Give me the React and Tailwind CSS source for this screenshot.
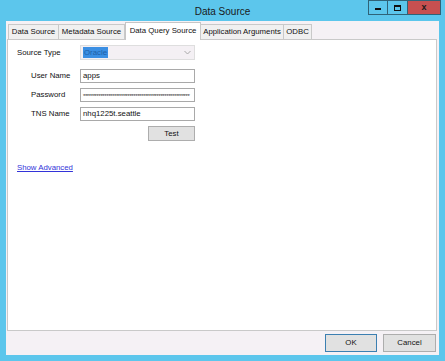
export default function App() {
  const tabs = [
    { label: "Data Source", w: "w-[51px]" },
    { label: "Metadata Source", w: "w-[67px]" },
    { label: "Data Query Source", w: "w-[76px]", active: true },
    { label: "Application Arguments", w: "w-[84px]" },
    { label: "ODBC", w: "w-[29px]" },
  ];
  return (
    <div className="w-[445px] h-[361px] bg-[#5cc6ec] flex flex-col px-[6px] pb-[6px] font-['Liberation_Sans',Arial,sans-serif] text-[#111] text-[7.8px] leading-none">
      {/* Title bar */}
      <div className="h-[21px] flex -mx-[6px] shrink-0">
        <div className="w-[77px]" />
        <div className="flex-1 text-center text-[10px] leading-[23px] text-[#1a1a1a]">Data Source</div>
        <div className="w-[77px] flex items-start">
          <div className="w-[20px] h-[15px] border border-[#2f6378] flex items-end justify-center pb-[4px]">
            <div className="w-[6px] h-[2px] bg-[#111]" />
          </div>
          <div className="w-[20px] h-[15px] border border-l-0 border-[#2f6378] flex items-center justify-center">
            <div className="w-[7px] h-[6px] border border-t-2 border-[#111]" />
          </div>
          <div className="w-[33px] h-[15px] border border-l-0 border-[#2f6378] bg-[#c75050] flex items-center justify-center text-[9px] font-bold text-[#1a1a1a]">
            x
          </div>
        </div>
      </div>

      {/* Client area */}
      <div className="flex-1 bg-[#f5f1f5] flex flex-col pl-[1px] pr-[2px] pt-[1px]">
        {/* Tabs */}
        <div className="h-[17px] flex items-end ml-[1px] relative z-10">
          {tabs.map((t) =>
            t.active ? (
              <div
                key={t.label}
                className={`${t.w} h-[18px] -mb-px bg-white border border-b-0 border-[#c6c6c6] flex items-center justify-center pb-[2px]`}
              >
                {t.label}
              </div>
            ) : (
              <div
                key={t.label}
                className={`${t.w} h-[15px] bg-[#f0f0f0] border border-b-0 border-[#c9c9c9] -ml-px first:ml-0 flex items-center justify-center`}
              >
                {t.label}
              </div>
            )
          )}
        </div>

        {/* Panel */}
        <div className="h-[292px] bg-white border border-[#c9c9c9] flex flex-col pt-[5px]">
          <div className="flex items-center h-[15px]">
            <div className="w-[72px] pl-[9px]">Source Type</div>
            <div className="w-[115px] h-[15px] border border-[#dedede] bg-[#f4f0f4] flex items-center pl-[2px] pr-[3px]">
              <span className="bg-[#3b8fe3] text-[#1f5fa8] h-[11px] px-[1px] flex items-center">Oracle</span>
              <div className="flex-1" />
              <svg width="7" height="5" viewBox="0 0 7 5">
                <path d="M0.5 1 L3.5 4 L6.5 1" fill="none" stroke="#a8a8a8" strokeWidth="1" />
              </svg>
            </div>
          </div>

          <div className="flex items-center h-[14px] mt-[9px]">
            <div className="w-[72px] pl-[23px]">User Name</div>
            <div className="w-[115px] h-[14px] border border-[#a9a9a9] bg-white flex items-center px-[2px]">apps</div>
          </div>

          <div className="flex items-center h-[14px] mt-[5px]">
            <div className="w-[72px] pl-[23px]">Password</div>
            <div className="w-[115px] h-[14px] border border-[#a9a9a9] bg-white flex items-center px-[2px] whitespace-nowrap">
              <span className="text-[6px] tracking-[-0.4px] text-[#333] pt-[2px]">
                *******************************************************
              </span>
            </div>
          </div>

          <div className="flex items-center h-[14px] mt-[5px]">
            <div className="w-[72px] pl-[23px]">TNS Name</div>
            <div className="w-[115px] h-[14px] border border-[#a9a9a9] bg-white flex items-center px-[2px]">nhq1225t.seattle</div>
          </div>

          <div className="flex h-[15px] mt-[5px]">
            <div className="w-[72px]" />
            <div className="w-[115px] flex justify-end">
              <div className="w-[47px] h-[15px] border border-[#adadad] bg-[#e1e1e1] flex items-center justify-center">Test</div>
            </div>
          </div>

          <div className="mt-[23px] pl-[9px]">
            <span className="text-[#3333d9] underline">Show Advanced</span>
          </div>
        </div>

        {/* Footer */}
        <div className="flex justify-end gap-[6px] pt-[3px] pr-[1px]">
          <div className="w-[52px] h-[18px] border border-[#3c7fb1] bg-[#e1e1e1] flex items-center justify-center">OK</div>
          <div className="w-[53px] h-[18px] border border-[#adadad] bg-[#e1e1e1] flex items-center justify-center">Cancel</div>
        </div>
      </div>
    </div>
  );
}
